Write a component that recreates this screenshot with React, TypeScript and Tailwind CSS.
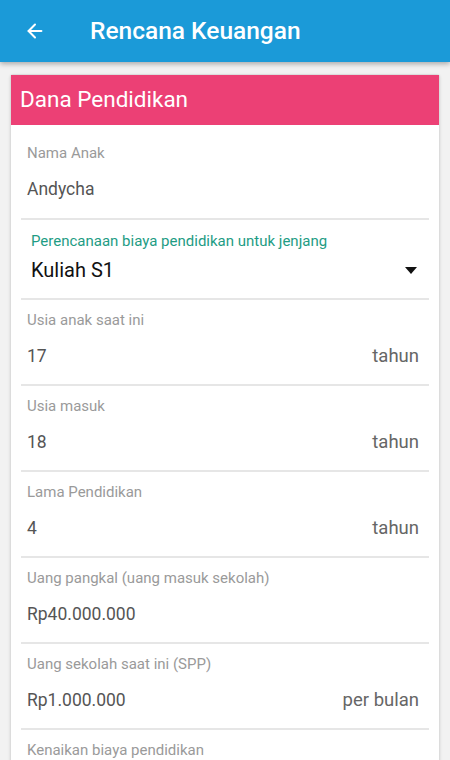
import { ArrowLeft } from "lucide-react";

type Row = { label: string; value: string; unit?: string };

const rows: Row[] = [
  { label: "Usia anak saat ini", value: "17", unit: "tahun" },
  { label: "Usia masuk", value: "18", unit: "tahun" },
  { label: "Lama Pendidikan", value: "4", unit: "tahun" },
  { label: "Uang pangkal (uang masuk sekolah)", value: "Rp40.000.000" },
  { label: "Uang sekolah saat ini (SPP)", value: "Rp1.000.000", unit: "per bulan" },
];

function Field({ label, value, unit }: Row) {
  return (
    <div className="h-[86px] border-b-2 border-[#e6e6e6] pt-[10px]">
      <p className="px-[6px] text-[15px] leading-[20px] text-[#9a9a9a]">{label}</p>
      <div className="mt-[14px] flex items-center justify-between px-[6px] pr-[10px] text-[17.5px] leading-[24px] text-[#555]">
        <span>{value}</span>
        {unit ? <span className="text-[18.5px] text-[#666]">{unit}</span> : null}
      </div>
    </div>
  );
}

export default function App() {
  return (
    <div className="h-[760px] overflow-hidden bg-[#f2f2f2] font-['Roboto',sans-serif]">
      <header className="flex h-[62px] items-center bg-[#1b9ad8] px-6 text-white shadow-[0_2px_5px_rgba(0,0,0,0.3)]">
        <ArrowLeft size={22} strokeWidth={2.2} />
        <h1 className="ml-[44px] text-[24.5px] font-medium">Rencana Keuangan</h1>
      </header>

      <section className="mx-[10px] mt-[12px] rounded-t-[3px] border border-[#dcdcdc] bg-white shadow-[0_1px_3px_rgba(0,0,0,0.12)]">
        <div className="flex h-[50px] items-center bg-[#ec4075] px-[9px] text-[22.5px] text-white">
          Dana Pendidikan
        </div>

        <div className="px-[10px]">
          <div className="h-[95px] border-b-2 border-[#e6e6e6] pt-[18px]">
            <p className="px-[6px] text-[15px] leading-[20px] text-[#9a9a9a]">Nama Anak</p>
            <p className="mt-[14px] px-[6px] text-[17.5px] leading-[24px] text-[#555]">Andycha</p>
          </div>

          <div className="h-[80px] border-b-2 border-[#e6e6e6] pt-[12px]">
            <p className="px-[10px] text-[15px] leading-[18px] text-[#1e9c84]">
              Perencanaan biaya pendidikan untuk jenjang
            </p>
            <div className="mt-[6px] flex items-center justify-between px-[10px] pr-[10px]">
              <span className="text-[20px] leading-[28px] text-[#111]">Kuliah S1</span>
              <svg width="12" height="7" viewBox="0 0 12 7" className="mr-[2px]">
                <path d="M0 0h12L6 7z" fill="#111" />
              </svg>
            </div>
          </div>

          {rows.map((row) => (
            <Field key={row.label} {...row} />
          ))}

          <div className="h-[60px] pt-[10px]">
            <p className="px-[6px] text-[15px] leading-[20px] text-[#9a9a9a]">Kenaikan biaya pendidikan</p>
          </div>
        </div>
      </section>
    </div>
  );
}
